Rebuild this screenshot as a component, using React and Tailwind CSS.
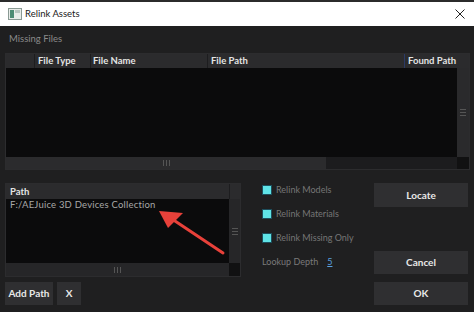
import React from "react";

const font = { fontFamily: 'Lato, "Noto Sans", Arial, sans-serif' };

function Grip({ vertical }) {
  // little "|||" handle drawn on the scrollbars
  return vertical ? (
    <div className="flex flex-col gap-[2px]">
      <div className="w-[6px] h-px bg-[#555]" />
      <div className="w-[6px] h-px bg-[#555]" />
      <div className="w-[6px] h-px bg-[#555]" />
    </div>
  ) : (
    <div className="flex gap-[2px]">
      <div className="w-px h-[6px] bg-[#555]" />
      <div className="w-px h-[6px] bg-[#555]" />
      <div className="w-px h-[6px] bg-[#555]" />
    </div>
  );
}

function Check({ label }) {
  return (
    <div className="flex items-center gap-[4px] h-[24px] whitespace-nowrap">
      <div className="w-[10px] h-[10px] bg-[#5fe3e6] border border-[#1d4e5c]" />
      <span className="text-[9px] text-[#767676]">{label}</span>
    </div>
  );
}

function Btn({ children, className = "" }) {
  return (
    <div className={"bg-[#2f2f31] flex items-center justify-center text-[10px] font-bold text-[#e8e8e8] whitespace-nowrap " + className}>
      {children}
    </div>
  );
}

export default function App() {
  return (
    <div className="w-[474px] h-[312px] bg-[#1f1f20] flex flex-col overflow-hidden relative" style={font}>
      <div className="h-[2px] bg-[#2b2b2b]" />
      <div className="h-[24px] bg-white flex items-center pl-[8px] pr-[8px]">
        <svg width="14" height="12" viewBox="0 0 14 12">
          <rect x="0.5" y="0.5" width="13" height="11" fill="#e8ece9" stroke="#8a9a94" />
          <rect x="2" y="2" width="4" height="8" fill="#4d8c74" />
          <rect x="7" y="2" width="5" height="3" fill="#b8c6c0" />
        </svg>
        <span className="ml-[3px] text-[9.5px] text-[#1a1a1a]">Relink Assets</span>
        <svg className="ml-auto mr-[1px]" width="10" height="10" viewBox="0 0 10 10">
          <path d="M0.5 0.5 L9.5 9.5 M9.5 0.5 L0.5 9.5" stroke="#222" strokeWidth="1" />
        </svg>
      </div>

      <div className="flex-1 px-[5px]">
        <div className="h-[27px] flex items-center pl-[4px] text-[9.5px] text-[#8a8a8a]">Missing Files</div>

        <div className="w-[465px] h-[117px] border border-[#2c2c2e] flex flex-col">
          <div className="h-[14px] bg-[#2b2b2d] flex text-[9.5px] font-bold text-[#e4e4e4] leading-[14px] whitespace-nowrap">
            <div className="w-[28px]" />
            <div className="w-[56px] border-l border-[#1d1d1f] pl-[3px]">File Type</div>
            <div className="w-[117px] border-l border-[#1d1d1f] pl-[2px]">File Name</div>
            <div className="w-[197px] border-l border-[#1d1d1f] pl-[3px]">File Path</div>
            <div className="flex-1 border-l border-[#2b3a66] pl-[3px]">Found Path</div>
          </div>
          <div className="flex-1 flex">
            <div className="flex-1 bg-[#0b0b0c]" />
            <div className="w-[12px] bg-[#2a2a2c] flex items-center justify-center">
              <Grip vertical />
            </div>
          </div>
          <div className="h-[12px] flex">
            <div className="w-[320px] bg-[#2b2b2d] flex items-center justify-center">
              <Grip />
            </div>
            <div className="flex-1 bg-[#1c1c1e]" />
            <div className="w-[12px] bg-[#111112]" />
          </div>
        </div>

        <div className="flex mt-[13px]">
          <div className="w-[236px] flex flex-col">
            <div className="h-[94px] border border-[#2c2c2e] flex flex-col relative">
              <div className="h-[15px] bg-[#2b2b2d] flex text-[9.5px] font-bold text-[#e4e4e4] leading-[15px]">
                <div className="flex-1 pl-[4px]">Path</div>
                <div className="w-[11px] border-l border-[#1d1d1f]" />
              </div>
              <div className="flex-1 flex">
                <div className="flex-1 bg-[#0b0b0c] pl-[4px] text-[9.5px] text-[#a8a8a8] leading-[12px] tracking-[0.2px] whitespace-nowrap">
                  F:/AEJuice 3D Devices Collection
                </div>
                <div className="w-[11px] bg-[#262628] flex items-center justify-center">
                  <Grip vertical />
                </div>
              </div>
              <div className="h-[13px] flex">
                <div className="flex-1 bg-[#262628] flex items-center justify-center">
                  <Grip />
                </div>
                <div className="w-[11px] bg-[#111112]" />
              </div>
              <svg className="absolute left-0 top-0 pointer-events-none" width="236" height="94" viewBox="0 0 236 94">
                <line x1="217" y1="69" x2="166" y2="35" stroke="#e8413a" strokeWidth="3" strokeLinecap="round" />
                <polygon points="153,27 177,29 162,44" fill="#e8413a" />
              </svg>
            </div>
            <div className="flex gap-[4px] mt-[5px]">
              <Btn className="w-[48px] h-[23px]">Add Path</Btn>
              <Btn className="w-[24px] h-[23px]">X</Btn>
            </div>
          </div>

          <div className="w-[133px] pl-[21px] flex flex-col">
            <div className="-mt-[5px]">
              <Check label="Relink Models" />
              <Check label="Relink Materials" />
              <Check label="Relink Missing Only" />
            </div>
            <div className="flex items-center h-[24px] text-[9px] whitespace-nowrap">
              <span className="text-[#7a7a7a]">Lookup Depth</span>
              <span className="ml-[9px] text-[#5aa0df] underline">5</span>
            </div>
          </div>

          <div className="w-[94px] flex flex-col">
            <Btn className="h-[24px]">Locate</Btn>
            <Btn className="h-[23px] mt-[44px]">Cancel</Btn>
            <Btn className="h-[23px] mt-[8px]">OK</Btn>
          </div>
        </div>
      </div>
    </div>
  );
}
